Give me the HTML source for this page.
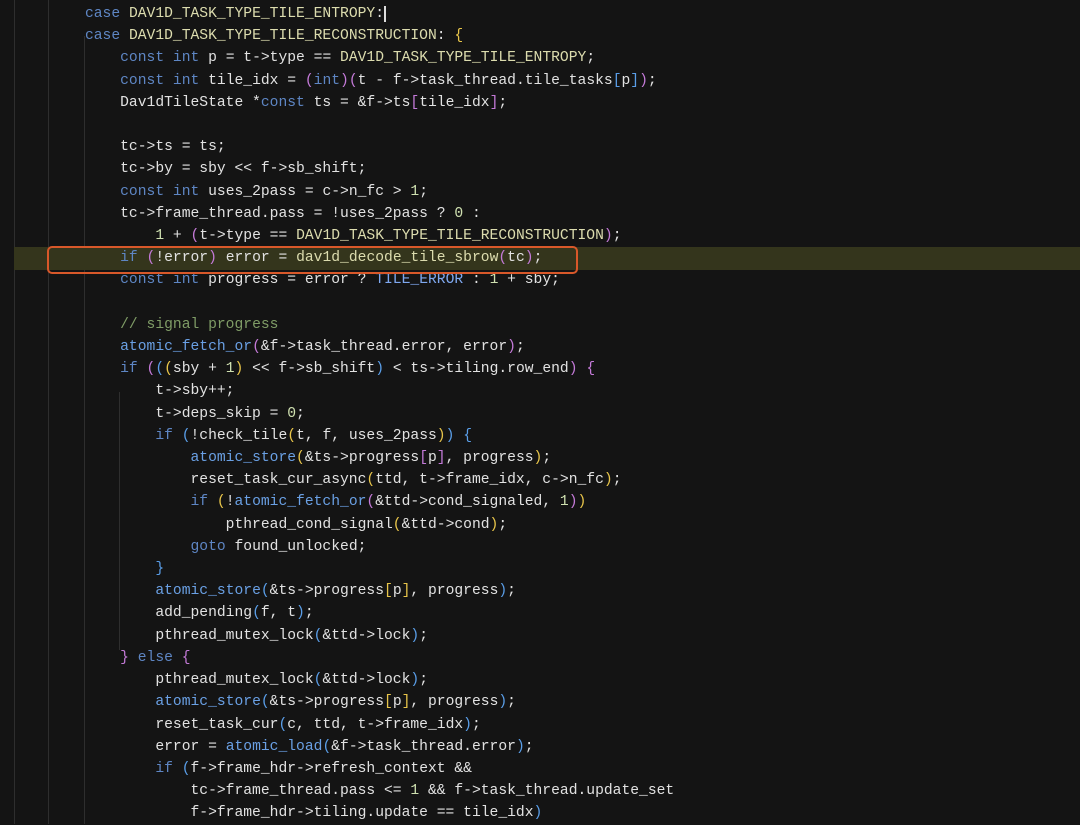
<!DOCTYPE html>
<html><head><meta charset="utf-8"><style>
html,body{margin:0;padding:0;background:#141414;width:1080px;height:824px;overflow:hidden}
.g{position:absolute;top:0;bottom:0;width:1px;background:#2e2e2e}
.hl{position:absolute;left:14px;right:0;top:247px;height:23px;background:#34351c}
.box{position:absolute;left:47px;top:246px;width:527px;height:24px;border:2px solid #d8582a;border-radius:5px}
pre{position:absolute;left:-3px;top:3px;margin:0;font-family:"Liberation Mono",monospace;font-size:14.67px;line-height:22.2px;color:#e2e2e2;white-space:pre}
.k{color:#5e86c4}.c{color:#dcdcae}.y{color:#e8c54a}.p{color:#c47ad8}.b{color:#5a9ee8}.m{color:#6aa0e4}.n{color:#cfe0b0}.cm{color:#7f9c66}.e{color:#7fa8f0}
.cur{border-right:2px solid #ddd}
</style></head><body>
<div class="g" style="left:14px"></div>
<div class="g" style="left:48px"></div>
<div class="g" style="left:84px;top:36px"></div>
<div class="g" style="left:119px;top:392px;height:258px"></div>
<div class="hl"></div>
<pre>          <span class="k">case</span> <span class="c">DAV1D_TASK_TYPE_TILE_ENTROPY</span><span class="cur">:</span>
          <span class="k">case</span> <span class="c">DAV1D_TASK_TYPE_TILE_RECONSTRUCTION</span>: <span class="y">{</span>
              <span class="k">const</span> <span class="k">int</span> p = t-&gt;type == <span class="c">DAV1D_TASK_TYPE_TILE_ENTROPY</span>;
              <span class="k">const</span> <span class="k">int</span> tile_idx = <span class="p">(</span><span class="k">int</span><span class="p">)</span><span class="p">(</span>t - f-&gt;task_thread.tile_tasks<span class="b">[</span>p<span class="b">]</span><span class="p">)</span>;
              Dav1dTileState *<span class="k">const</span> ts = &amp;f-&gt;ts<span class="p">[</span>tile_idx<span class="p">]</span>;

              tc-&gt;ts = ts;
              tc-&gt;by = sby &lt;&lt; f-&gt;sb_shift;
              <span class="k">const</span> <span class="k">int</span> uses_2pass = c-&gt;n_fc &gt; <span class="n">1</span>;
              tc-&gt;frame_thread.pass = !uses_2pass ? <span class="n">0</span> :
                  <span class="n">1</span> + <span class="p">(</span>t-&gt;type == <span class="c">DAV1D_TASK_TYPE_TILE_RECONSTRUCTION</span><span class="p">)</span>;
              <span class="k">if</span> <span class="p">(</span>!error<span class="p">)</span> error = <span class="c">dav1d_decode_tile_sbrow</span><span class="p">(</span>tc<span class="p">)</span>;
              <span class="k">const</span> <span class="k">int</span> progress = error ? <span class="e">TILE_ERROR</span> : <span class="n">1</span> + sby;

              <span class="cm">// signal progress</span>
              <span class="m">atomic_fetch_or</span><span class="p">(</span>&amp;f-&gt;task_thread.error, error<span class="p">)</span>;
              <span class="k">if</span> <span class="p">(</span><span class="b">(</span><span class="y">(</span>sby + <span class="n">1</span><span class="y">)</span> &lt;&lt; f-&gt;sb_shift<span class="b">)</span> &lt; ts-&gt;tiling.row_end<span class="p">)</span> <span class="p">{</span>
                  t-&gt;sby++;
                  t-&gt;deps_skip = <span class="n">0</span>;
                  <span class="k">if</span> <span class="b">(</span>!check_tile<span class="y">(</span>t, f, uses_2pass<span class="y">)</span><span class="b">)</span> <span class="b">{</span>
                      <span class="m">atomic_store</span><span class="y">(</span>&amp;ts-&gt;progress<span class="p">[</span>p<span class="p">]</span>, progress<span class="y">)</span>;
                      reset_task_cur_async<span class="y">(</span>ttd, t-&gt;frame_idx, c-&gt;n_fc<span class="y">)</span>;
                      <span class="k">if</span> <span class="y">(</span>!<span class="m">atomic_fetch_or</span><span class="p">(</span>&amp;ttd-&gt;cond_signaled, <span class="n">1</span><span class="p">)</span><span class="y">)</span>
                          pthread_cond_signal<span class="y">(</span>&amp;ttd-&gt;cond<span class="y">)</span>;
                      <span class="k">goto</span> found_unlocked;
                  <span class="b">}</span>
                  <span class="m">atomic_store</span><span class="b">(</span>&amp;ts-&gt;progress<span class="y">[</span>p<span class="y">]</span>, progress<span class="b">)</span>;
                  add_pending<span class="b">(</span>f, t<span class="b">)</span>;
                  pthread_mutex_lock<span class="b">(</span>&amp;ttd-&gt;lock<span class="b">)</span>;
              <span class="p">}</span> <span class="k">else</span> <span class="p">{</span>
                  pthread_mutex_lock<span class="b">(</span>&amp;ttd-&gt;lock<span class="b">)</span>;
                  <span class="m">atomic_store</span><span class="b">(</span>&amp;ts-&gt;progress<span class="y">[</span>p<span class="y">]</span>, progress<span class="b">)</span>;
                  reset_task_cur<span class="b">(</span>c, ttd, t-&gt;frame_idx<span class="b">)</span>;
                  error = <span class="m">atomic_load</span><span class="b">(</span>&amp;f-&gt;task_thread.error<span class="b">)</span>;
                  <span class="k">if</span> <span class="b">(</span>f-&gt;frame_hdr-&gt;refresh_context &amp;&amp;
                      tc-&gt;frame_thread.pass &lt;= <span class="n">1</span> &amp;&amp; f-&gt;task_thread.update_set
                      f-&gt;frame_hdr-&gt;tiling.update == tile_idx<span class="b">)</span>
</pre>
<div class="box"></div>
</body></html>
